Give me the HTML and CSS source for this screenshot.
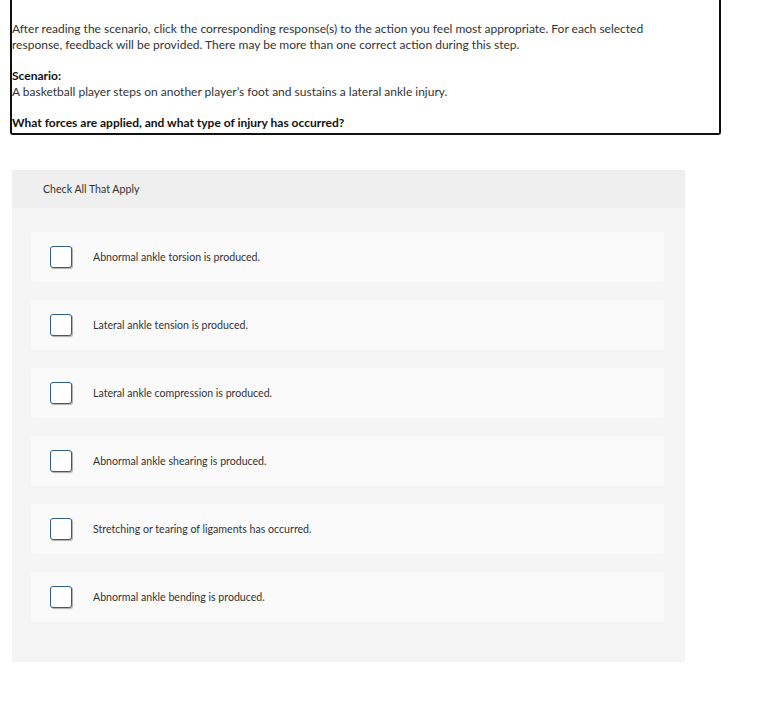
FILE: index.html
```html
<!DOCTYPE html>
<html lang="en">
<head>
  <meta charset="UTF-8" />
  <meta name="viewport" content="width=device-width, initial-scale=1.0"/>
  <title>Scenario - Check All That Apply</title>
  <link rel="stylesheet" href="styles.css">
</head>
<body>

  <div class="prompt">
    <p>After reading the scenario, click the corresponding response(s) to the action you feel most appropriate. For each selected response, feedback will be provided. There may be more than one correct action during this step.</p>
    <p><strong>Scenario:</strong><br>A basketball player steps on another player’s foot and sustains a lateral ankle injury.</p>
    <p class="question">What forces are applied, and what type of injury has occurred?</p>
  </div>

  <section class="choices">
    <div class="choices-head">Check All That Apply</div>
    <div class="choices-list">
      <label class="choice"><span class="box"></span>Abnormal ankle torsion is produced.</label>
      <label class="choice"><span class="box"></span>Lateral ankle tension is produced.</label>
      <label class="choice"><span class="box"></span>Lateral ankle compression is produced.</label>
      <label class="choice"><span class="box"></span>Abnormal ankle shearing is produced.</label>
      <label class="choice"><span class="box"></span>Stretching or tearing of ligaments has occurred.</label>
      <label class="choice"><span class="box"></span>Abnormal ankle bending is produced.</label>
    </div>
  </section>

</body>
</html>
```

FILE: styles.css
```css
body {
  margin: 0;
  padding: 0;
  background-color: #fff;
  font-family: 'Lato', sans-serif;
  color: #333;
}

.prompt {
  width: 711px;
  box-sizing: border-box;
  margin-left: 10px;
  padding: 21px 50px 2px 0;
  border: 2px solid #111;
  border-top: none;
  border-radius: 0 0 3px 3px;
  font-size: 12px;
  line-height: 16px;
}

.prompt p {
  margin: 0 0 15px 0;
}

.prompt p.question {
  margin: 0;
  font-weight: bold;
  color: #111;
}

.prompt strong {
  color: #111;
}

.choices {
  width: 673px;
  margin: 35px 0 0 12px;
  background-color: #f5f5f5;
  padding-bottom: 40px;
}

.choices-head {
  height: 38px;
  line-height: 38px;
  padding-left: 31px;
  background-color: #efefef;
  font-size: 10.6px;
  color: #333;
}

.choices-list {
  display: flex;
  flex-direction: column;
  gap: 18px;
  padding: 24px 21px 0 19px;
}

.choice {
  display: flex;
  align-items: center;
  height: 50px;
  padding-left: 19px;
  background-color: #fafafa;
  border-radius: 3px;
  font-size: 10.6px;
  color: #333;
  cursor: pointer;
}

.box {
  width: 22px;
  height: 22px;
  box-sizing: border-box;
  margin-right: 21px;
  border: 1.5px solid #2f5d8c;
  border-radius: 3px;
  background-color: #fff;
  box-shadow: 1px 1px 1px rgba(0,0,0,0.3);
}
```
